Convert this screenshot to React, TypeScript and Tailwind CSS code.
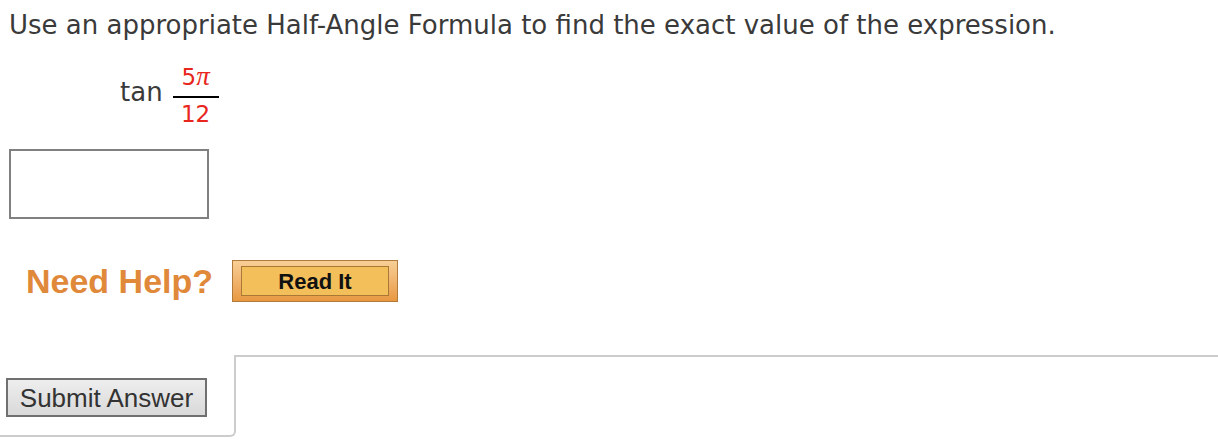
export default function App() {
  return (
    <div className="w-[1218px] h-[446px] bg-white overflow-hidden" style={{ fontFamily: 'Verdana, "DejaVu Sans", sans-serif' }}>
      {/* Question */}
      <div className="pl-[9px] pt-[10px] text-[26px] leading-[30px] text-[#3a3a3a] whitespace-nowrap">
        Use an appropriate Half-Angle Formula to find the exact value of the expression.
      </div>

      {/* Expression */}
      <div className="flex items-start pl-[120px] mt-[23px] text-[#3a3a3a]">
        <span className="mt-[14px] mr-[10px] text-[26px] leading-[30px]">tan</span>
        <span className="flex flex-col items-center w-[46px] text-[23px] text-[#e8261c]">
          <span className="h-[26px] leading-[26px] mb-[7px] whitespace-nowrap">
            5<i className="text-[27px]" style={{ fontFamily: '"Liberation Serif", serif' }}>π</i>
          </span>
          <span className="block w-full h-[2px] bg-black" />
          <span className="h-[26px] leading-[26px] mt-[3px]">12</span>
        </span>
      </div>

      {/* Answer box */}
      <div className="ml-[9px] mt-[22px] w-[200px] h-[70px] border-2 border-[#808080]" />

      {/* Need help */}
      <div className="flex items-center mt-[41px] pl-[26px]" style={{ fontFamily: '"Liberation Sans", Arial, sans-serif' }}>
        <span className="w-[206px] text-[34px] leading-[40px] font-bold text-[#e0893a] whitespace-nowrap">Need Help?</span>
        <button className="w-[166px] h-[42px] border border-[#b07a3a] bg-gradient-to-b from-[#f8cf96] to-[#e8983f] px-[8px] py-[5px]">
          <span className="flex items-center justify-center w-full h-full border border-[#a97836] bg-[#f2bf5b] text-[22px] font-bold text-[#111]">
            Read It
          </span>
        </button>
      </div>

      {/* Submit row */}
      <div className="flex mt-[53px]">
        <div className="w-[236px] h-[82px] border-b-2 border-r-2 border-[#cccccc] rounded-br-[6px] pt-[23px] pl-[6px]">
          <button
            className="w-[201px] h-[39px] border-2 border-[#707070] bg-gradient-to-b from-[#eeeeee] to-[#d9d9d9] text-[26px] leading-[30px] text-[#333]"
            style={{ fontFamily: '"Liberation Sans", Arial, sans-serif' }}
          >
            Submit Answer
          </button>
        </div>
        <div className="flex-1 border-t-2 border-[#cccccc]" />
      </div>
    </div>
  )
}
